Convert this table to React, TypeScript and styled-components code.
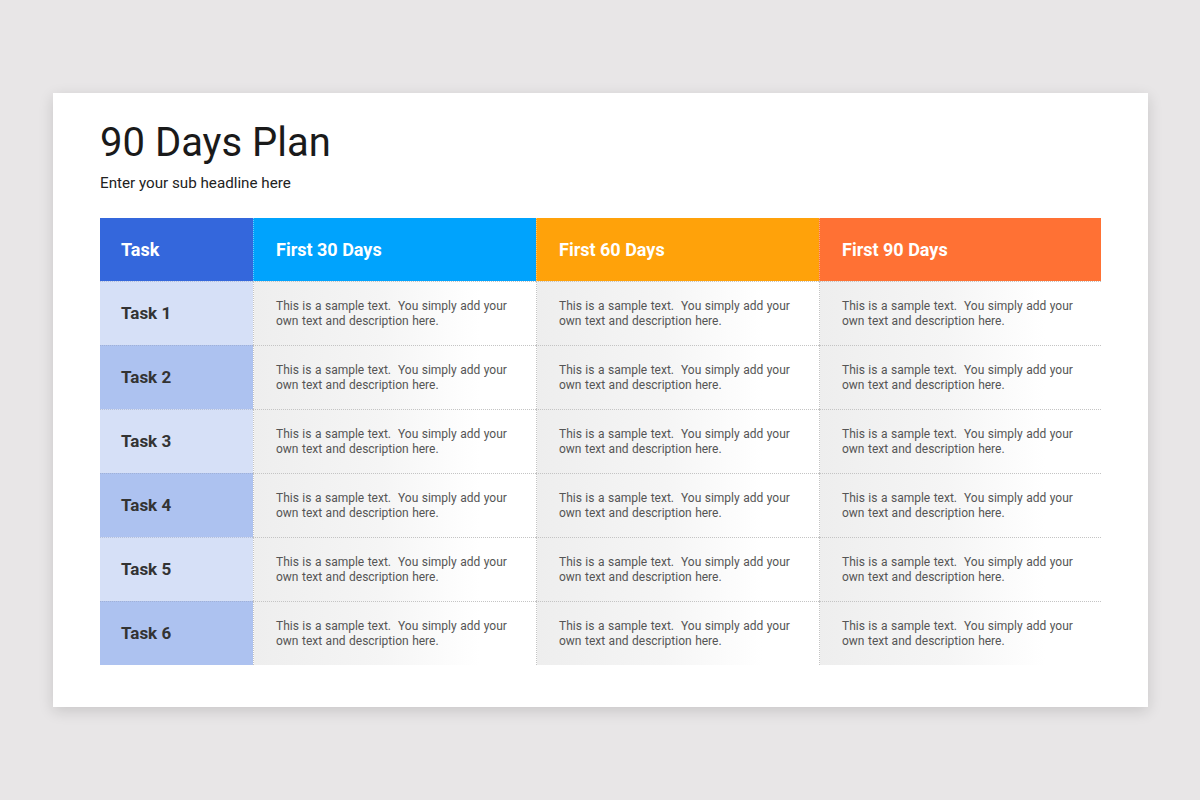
import React from 'react'
import styled, { createGlobalStyle } from 'styled-components'

const GlobalStyle = createGlobalStyle`
  html, body {
    margin: 0;
    padding: 0;
    background: #e8e6e7;
    font-family: Roboto, 'Liberation Sans', sans-serif;
  }
`

const Page = styled.div`
  width: 1200px;
  height: 800px;
  padding: 93px 0 0 53px;
  box-sizing: border-box;
`

const Card = styled.div`
  width: 1095px;
  height: 614px;
  background: #ffffff;
  box-shadow: 0 4px 14px rgba(0, 0, 0, 0.14);
  padding: 27px 47px 0 47px;
  box-sizing: border-box;
`

const Title = styled.h1`
  margin: 0;
  font-size: 40px;
  font-weight: 400;
  color: #1a1a1a;
  line-height: 46px;
`

const Sub = styled.p`
  margin: 7px 0 0 0;
  font-size: 15.2px;
  color: #222;
  line-height: 20px;
`

const Table = styled.div`
  margin-top: 25px;
  display: grid;
  grid-template-columns: 153px 283px 283px 282px;
  grid-template-rows: 63px repeat(6, 64px);
`

const Head = styled.div<{ $bg: string }>`
  background: ${(p) => p.$bg};
  color: #fff;
  font-weight: 700;
  font-size: 18px;
  display: flex;
  align-items: center;
  padding-left: 22px;
  border-left: 1px dotted rgba(255, 255, 255, 0.4);
  &:first-child {
    padding-left: 21px;
    border-left: none;
  }
`

const TaskCell = styled.div<{ $dark: boolean }>`
  background: ${(p) => (p.$dark ? '#adc2f0' : '#d6e0f7')};
  color: #333;
  font-weight: 700;
  font-size: 17px;
  display: flex;
  align-items: center;
  padding: 0 0 2px 21px;
  border-top: 1px dotted rgba(150, 160, 190, 0.5);
`

const TextCell = styled.div`
  background: linear-gradient(90deg, #eeeeee 0%, #f5f5f5 45%, #ffffff 80%);
  border-left: 1px dotted #c4c4c4;
  border-top: 1px dotted #c4c4c4;
  padding: 17px 0 0 22px;
  font-size: 12px;
  word-spacing: 0.5px;
  line-height: 15px;
  color: #555;
  box-sizing: border-box;
`

const heads = [
  { label: 'Task', bg: '#3467dc' },
  { label: 'First 30 Days', bg: '#00a3fd' },
  { label: 'First 60 Days', bg: '#ffa20a' },
  { label: 'First 90 Days', bg: '#ff7134' },
]

const tasks = ['Task 1', 'Task 2', 'Task 3', 'Task 4', 'Task 5', 'Task 6']

const App: React.FC = () => {
  return (
    <Page>
      <GlobalStyle />
      <Card>
        <Title>90 Days Plan</Title>
        <Sub>Enter your sub headline here</Sub>
        <Table>
          {heads.map((h) => (
            <Head key={h.label} $bg={h.bg}>
              {h.label}
            </Head>
          ))}
          {tasks.map((t, i) => (
            <React.Fragment key={t}>
              <TaskCell $dark={i % 2 === 1}>{t}</TaskCell>
              {[0, 1, 2].map((c) => (
                <TextCell key={c}>
                  This is a sample text.&nbsp; You simply add your
                  <br />
                  own text and description here.
                </TextCell>
              ))}
            </React.Fragment>
          ))}
        </Table>
      </Card>
    </Page>
  )
}

export default App
